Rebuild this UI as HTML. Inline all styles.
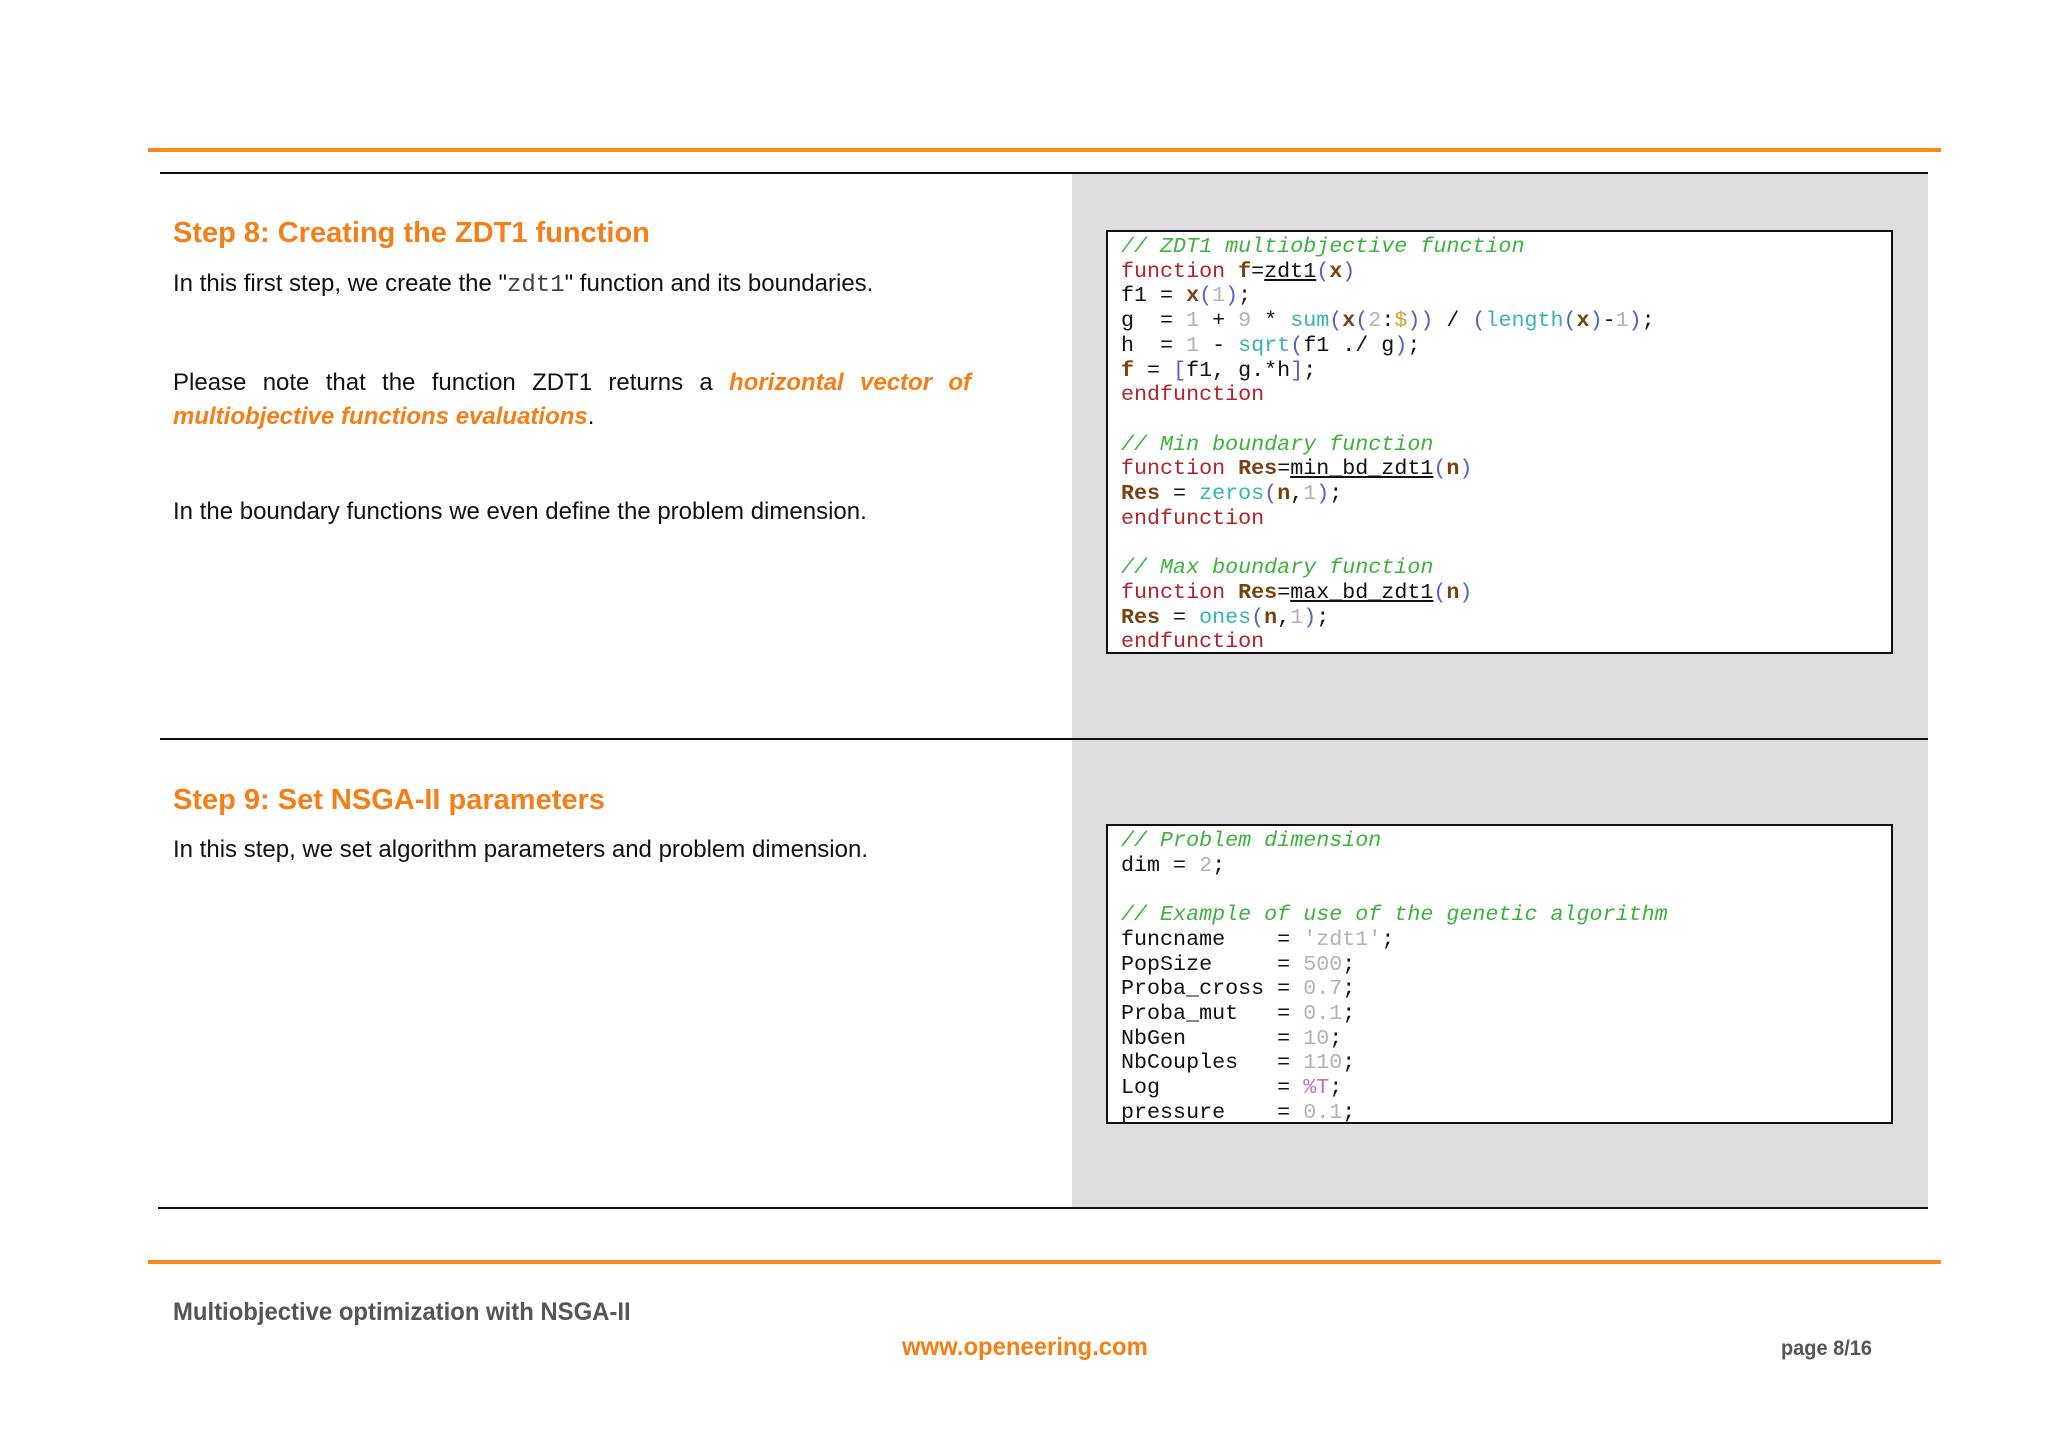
<!DOCTYPE html>
<html><head><meta charset="utf-8"><style>
body{margin:0;width:2048px;height:1448px;background:#fff;position:relative;overflow:hidden;font-family:"Liberation Sans",sans-serif}
.abs{position:absolute}
.gray{background:#dedcdf}
.code{position:absolute;left:1106px;width:787px;background:#fff;border:2px solid #111;box-sizing:border-box;font-family:"Liberation Mono",monospace;font-size:21.7px;line-height:24.7px;padding:3px 0 0 13px;white-space:pre;color:#111}
.c{color:#3cb33c;font-style:italic}.k{color:#b4232a}.v{color:#7a4010;font-weight:bold}.n{color:#b8aeb4}.f{color:#36b4b4}.p{color:#5560c8}.s{color:#b8aeb4}.m{color:#c070c0}.u{text-decoration:underline}
.h{color:#f47f17;font-weight:bold;font-size:29px;left:173px}
.t{font-size:24px;color:#111;left:173px}
.o{color:#f47f17;font-weight:bold;font-style:italic}
</style></head><body>
<div class="abs" style="left:148px;top:148px;width:1793px;height:4px;background:#f7891f"></div>
<div class="abs gray" style="left:1072px;top:174px;width:856px;height:1034px"></div>
<div class="abs" style="left:160px;top:172px;width:1768px;height:2px;background:#111"></div>
<div class="abs" style="left:160px;top:738px;width:1768px;height:2px;background:#111"></div>
<div class="abs" style="left:158px;top:1207px;width:1770px;height:2px;background:#111"></div>

<div class="abs h" style="top:217px">Step 8: Creating the ZDT1 function</div>
<div class="abs t" style="top:270px">In this first step, we create the "<span style="font-family:'Liberation Mono',monospace;color:#444">zdt1</span>" function and its boundaries.</div>
<div class="abs t" style="top:366px;width:798px;line-height:34px;text-align:justify;text-align-last:left">Please note that the function ZDT1 returns a <span class="o">horizontal vector of multiobjective functions evaluations</span>.</div>
<div class="abs t" style="top:498px">In the boundary functions we even define the problem dimension.</div>

<div class="code" style="top:230px;height:424px"><span class="c">// ZDT1 multiobjective function</span>
<span class="k">function</span> <span class="v">f</span>=<span class="u">zdt1</span><span class="p">(</span><span class="v">x</span><span class="p">)</span>
f1 = <span class="v">x</span><span class="p">(</span><span class="n">1</span><span class="p">)</span>;
g  = <span class="n">1</span> + <span class="n">9</span> * <span class="f">sum</span><span class="p">(</span><span class="v">x</span><span class="p">(</span><span class="n">2</span>:<span style="color:#e0a030">$</span><span class="p">))</span> / <span class="p">(</span><span class="f">length</span><span class="p">(</span><span class="v">x</span><span class="p">)</span>-<span class="n">1</span><span class="p">)</span>;
h  = <span class="n">1</span> - <span class="f">sqrt</span><span class="p">(</span>f1 ./ g<span class="p">)</span>;
<span class="v">f</span> = <span class="p">[</span>f1, g.*h<span class="p">]</span>;
<span class="k">endfunction</span>

<span class="c">// Min boundary function</span>
<span class="k">function</span> <span class="v">Res</span>=<span class="u">min_bd_zdt1</span><span class="p">(</span><span class="v">n</span><span class="p">)</span>
<span class="v">Res</span> = <span class="f">zeros</span><span class="p">(</span><span class="v">n</span>,<span class="n">1</span><span class="p">)</span>;
<span class="k">endfunction</span>

<span class="c">// Max boundary function</span>
<span class="k">function</span> <span class="v">Res</span>=<span class="u">max_bd_zdt1</span><span class="p">(</span><span class="v">n</span><span class="p">)</span>
<span class="v">Res</span> = <span class="f">ones</span><span class="p">(</span><span class="v">n</span>,<span class="n">1</span><span class="p">)</span>;
<span class="k">endfunction</span></div>

<div class="abs h" style="top:784px">Step 9: Set NSGA-II parameters</div>
<div class="abs t" style="top:836px">In this step, we set algorithm parameters and problem dimension.</div>

<div class="code" style="top:824px;height:300px"><span class="c">// Problem dimension</span>
dim = <span class="n">2</span>;

<span class="c">// Example of use of the genetic algorithm</span>
funcname    = <span class="s">'zdt1'</span>;
PopSize     = <span class="n">500</span>;
Proba_cross = <span class="n">0.7</span>;
Proba_mut   = <span class="n">0.1</span>;
NbGen       = <span class="n">10</span>;
NbCouples   = <span class="n">110</span>;
Log         = <span class="m">%T</span>;
pressure    = <span class="n">0.1</span>;</div>

<div class="abs" style="left:148px;top:1260px;width:1793px;height:4px;background:#f7891f"></div>
<div class="abs" style="left:173px;top:1298px;font-size:25px;font-weight:bold;color:#555;transform:scaleX(.955);transform-origin:left">Multiobjective optimization with NSGA-II</div>
<div class="abs" style="left:902px;top:1333px;font-size:25px;font-weight:bold;color:#f47f17;transform:scaleX(.955);transform-origin:left">www.openeering.com</div>
<div class="abs" style="left:1781px;top:1337px;font-size:21px;font-weight:bold;color:#555;transform:scaleX(.95);transform-origin:left">page 8/16</div>
</body></html>
